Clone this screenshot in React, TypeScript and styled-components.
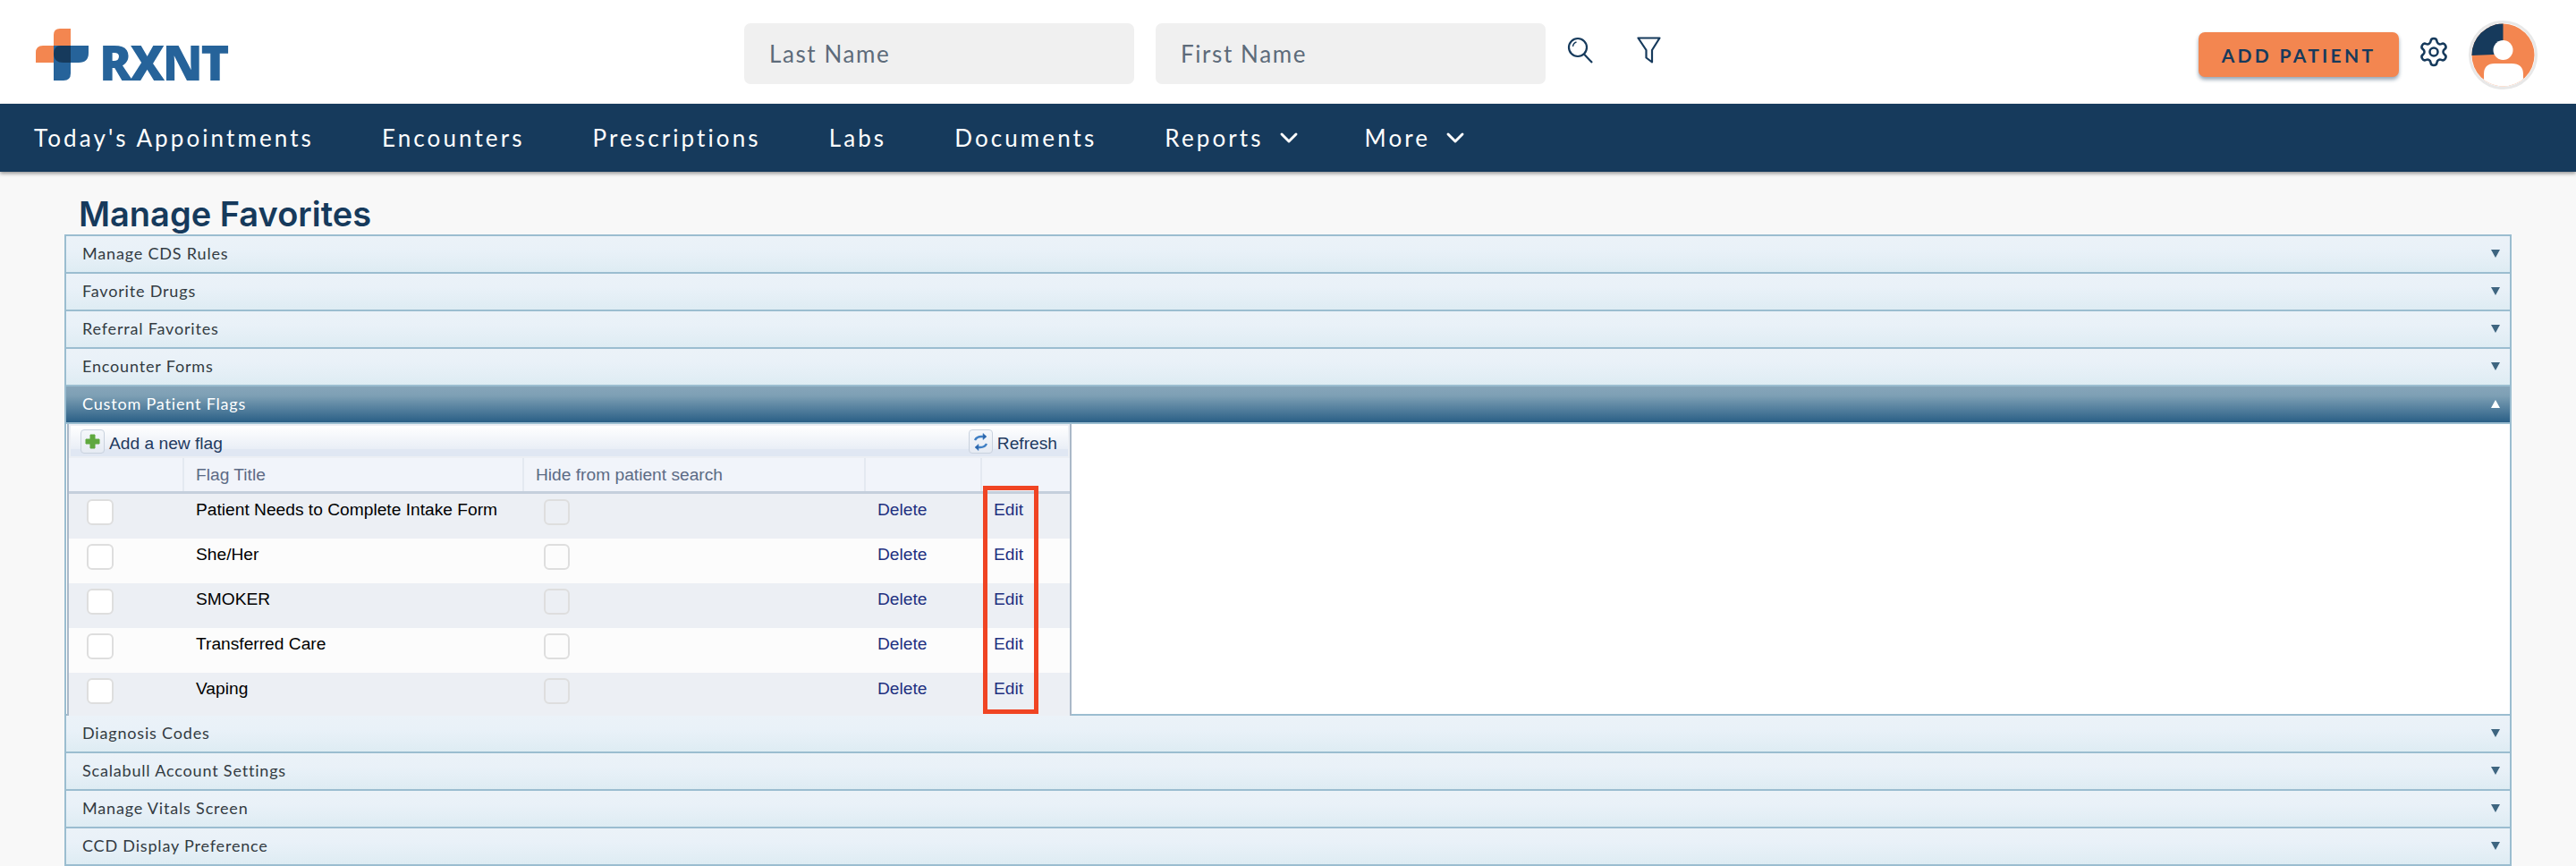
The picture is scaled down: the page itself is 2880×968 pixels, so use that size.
import React from "react";
import styled, { createGlobalStyle } from "styled-components";
import { Settings, ChevronDown } from "lucide-react";

const Global = createGlobalStyle`
  html, body { margin: 0; padding: 0; background: #f8f8f8; }
  body { width: 2880px; height: 968px; overflow: hidden; font-family: "Lato", sans-serif; }
`;

const Page = styled.div`
  width: 2880px;
  height: 968px;
  display: flex;
  flex-direction: column;
  overflow: hidden;
`;

const TopBar = styled.header`
  height: 116px;
  background: #fff;
  display: flex;
  align-items: center;
  padding: 0 43px 0 40px;
  box-sizing: border-box;
`;

const Logo = styled.div`
  display: flex;
  align-items: flex-end;
  gap: 11px;
  height: 58px;
  width: 792px;
  margin-top: 6px;
`;

const LogoText = styled.span`
  font-family: "Open Sans", sans-serif;
  font-weight: 800;
  font-size: 54px;
  line-height: 39px;
  height: 39px;
  margin-bottom: 1px;
  color: #26639a;
  letter-spacing: -2.4px;
`;

const SearchField = styled.div`
  width: 436px;
  height: 68px;
  background: #f0f0f0;
  border-radius: 7px;
  display: flex;
  align-items: center;
  padding-left: 28px;
  box-sizing: border-box;
  margin-right: 24px;
  margin-top: 4px;
  font-size: 26px;
  letter-spacing: 1.6px;
  color: #5d6b7a;
`;

const IconButton = styled.div<{ $w: number; $ml: number }>`
  width: ${(p) => p.$w}px;
  margin-left: ${(p) => p.$ml}px;
  margin-top: -5px;
  display: flex;
  color: #163a5c;
`;

const RightGroup = styled.div`
  margin-left: auto;
  margin-top: 6px;
  display: flex;
  align-items: center;
`;

const AddButton = styled.button`
  width: 224px;
  height: 50px;
  background: #f38650;
  border: 0;
  border-radius: 7px;
  box-shadow: 0 3px 4px rgba(22, 58, 92, 0.45);
  color: #163a5c;
  font-family: "Lato", sans-serif;
  font-weight: 700;
  font-size: 21px;
  letter-spacing: 3.3px;
  padding: 0;
  margin-right: 21px;
`;

const GearWrap = styled.div`
  display: flex;
  color: #163a5c;
  margin-right: 21px;
  margin-top: -7px;
`;

const NavBar = styled.nav`
  height: 76px;
  background: #163a5c;
  box-shadow: 0 2px 4px rgba(0, 0, 0, 0.4);
  display: flex;
  align-items: center;
  padding-left: 38px;
  gap: 76px;
  color: #fff;
  font-size: 26px;
  letter-spacing: 3.1px;
  position: relative;
`;

const NavItem = styled.span`
  display: flex;
  align-items: center;
  gap: 12px;
`;

const NavChevron = styled(ChevronDown)`
  margin-right: -7px;
`;

const Main = styled.main`
  flex: 1;
  padding: 0 72px;
  display: flex;
  flex-direction: column;
`;

const Title = styled.h1`
  margin: 0;
  height: 70px;
  padding: 24px 0 0 16px;
  box-sizing: border-box;
  font-family: "Inter", sans-serif;
  font-weight: 600;
  font-size: 38px;
  line-height: 46px;
  color: #163a5c;
`;

const Accordion = styled.section`
  border: solid #9bbdd0;
  border-width: 2px 2px 0 2px;
  display: flex;
  flex-direction: column;
  width: 2736px;
  box-sizing: border-box;
`;

const Head = styled.div<{ $active?: boolean }>`
  height: 42px;
  flex: none;
  box-sizing: border-box;
  border-bottom: 2px solid #9bbdd0;
  background: ${(p) =>
    p.$active
      ? "linear-gradient(#86a5b9 0%, #7ea0b5 25%, #2a5f86 100%)"
      : "linear-gradient(#ebf2f8 0%, #e9f1f8 40%, #deecf3 100%)"};
  color: ${(p) => (p.$active ? "#fff" : "#333b42")};
  display: flex;
  align-items: center;
  justify-content: space-between;
  padding: 0 11px 2px 18px;
  font-size: 18px;
  letter-spacing: 0.82px;
`;

const Arrow = styled.svg`
  width: 10px;
  height: 9px;
  display: block;
`;

const Pane = styled.div`
  height: 326px;
  flex: none;
  background: #fff;
  border-bottom: 2px solid #9bbdd0;
  box-sizing: border-box;
  display: flex;
`;

const Grid = styled.div`
  position: relative;
  width: 1123px;
  margin-left: 1px;
  height: 326px;
  flex: none;
  box-sizing: border-box;
  border: solid #aab8c8;
  border-width: 0 2px 0 2px;
  padding-top: 2px;
  font-family: "Liberation Sans", Arial, sans-serif;
  font-size: 19.2px;
  background: #eceff4;
`;

const Toolbar = styled.div`
  height: 34px;
  margin-left: 2px;
  margin-right: 2px;
  padding: 6px 12px 1px 11px;
  box-sizing: border-box;
  display: flex;
  align-items: center;
  justify-content: space-between;
  background: linear-gradient(#ffffff 0%, #e9eef6 76%, #e0e7f3 77%, #e0e7f3 100%);
  color: #1f3a5f;
`;

const ToolGroup = styled.div`
  display: flex;
  align-items: center;
  gap: 5px;
`;

const ToolIcon = styled.div`
  width: 27px;
  height: 27px;
  margin-top: -4px;
  box-sizing: border-box;
  border: 1px solid #c9d2de;
  border-radius: 4px;
  background: linear-gradient(#f5f7fb, #e6ebf3);
  display: flex;
  align-items: center;
  justify-content: center;
`;

const ColumnHead = styled.div`
  height: 40px;
  margin-top: 2px;
  box-sizing: border-box;
  background: #f1f4fa;
  border-bottom: 3px solid #c5cfdc;
  display: grid;
  grid-template-columns: 129px 380px 382px 130px 98px;
  color: #5c6b85;
`;

const HeadCell = styled.div`
  border-right: 2px solid #e4e9f1;
  padding: 6px 0 0 13px;
  line-height: 26px;
  box-sizing: border-box;
  &:last-child { border-right: 0; }
`;

const Row = styled.div<{ $odd: boolean; $h: number }>`
  height: ${(p) => p.$h}px;
  background: ${(p) => (p.$odd ? "#eceff4" : "#fcfcfc")};
  display: grid;
  grid-template-columns: 129px 380px 382px 130px 98px;
  color: #000;
`;

const Cell = styled.div<{ $pad?: number }>`
  padding: 5px 0 0 ${(p) => p.$pad ?? 13}px;
  line-height: 26px;
  box-sizing: border-box;
`;

const LinkText = styled.span`
  color: #1f2f80;
`;

const Check = styled.div<{ $white?: boolean }>`
  width: ${(p) => (p.$white ? 30 : 29)}px;
  height: 29px;
  box-sizing: border-box;
  border: 2px solid #dedede;
  border-radius: 6px;
  background: ${(p) => (p.$white ? "#fff" : "transparent")};
  margin-top: 1px;
`;

const RedBox = styled.div`
  position: absolute;
  left: 1022px;
  top: 69px;
  width: 62px;
  height: 255px;
  box-sizing: border-box;
  border: 5px solid #f04423;
  pointer-events: none;
`;

const heads1 = ["Manage CDS Rules", "Favorite Drugs", "Referral Favorites", "Encounter Forms"];
const heads2 = ["Diagnosis Codes", "Scalabull Account Settings", "Manage Vitals Screen", "CCD Display Preference"];
const flags = ["Patient Needs to Complete Intake Form", "She/Her", "SMOKER", "Transferred Care", "Vaping"];

const Tri = ({ up }: { up?: boolean }) => (
  <Arrow viewBox="0 0 10 9">
    <path d={up ? "M5 0 L10 9 L0 9 Z" : "M0 0 L10 0 L5 9 Z"} fill={up ? "#fff" : "#3e6580"} />
  </Arrow>
);

export default function App() {
  return (
    <Page>
      <Global />
      <TopBar>
        <Logo>
          <svg width="60" height="58" viewBox="0 0 60 58">
            <path d="M27 0 H39 V38 H0 V27 Q0 19 8 19 H20 V7 Q20 0 27 0 Z" fill="#f38650" />
            <path d="M20 19 H59 V27 Q59 38 48 38 H39 V50 Q39 58 31 58 H20 Z" fill="#26639a" />
            <path d="M28 19 H39 V38 H31 Q20 38 20 28 Q20 19 28 19 Z" fill="#163a5c" />
          </svg>
          <LogoText>RXNT</LogoText>
        </Logo>
        <SearchField>Last Name</SearchField>
        <SearchField>First Name</SearchField>
        <IconButton $w={30} $ml={0}>
          <svg width="30" height="30" viewBox="0 0 30 30" fill="none" stroke="currentColor" strokeWidth="2.2">
            <circle cx="12" cy="12" r="10" />
            <path d="M19 19.5 L28 29" />
            <path d="M6.5 11 Q7 7 10.5 6" strokeWidth="1.4" />
          </svg>
        </IconButton>
        <IconButton $w={27} $ml={48}>
          <svg width="27" height="30" viewBox="0 0 27 30" fill="none" stroke="currentColor" strokeWidth="2.2">
            <path d="M1.5 1.5 H25.5 L17 15 V28.5 L10.5 23.5 V15 Z" strokeLinejoin="round" />
          </svg>
        </IconButton>
        <RightGroup>
          <AddButton>ADD PATIENT</AddButton>
          <GearWrap>
            <Settings size={36} strokeWidth={1.7} />
          </GearWrap>
          <svg width="77" height="77" viewBox="0 0 77 77">
            <defs>
              <clipPath id="disc"><circle cx="38.5" cy="38.5" r="35" /></clipPath>
            </defs>
            <circle cx="38.5" cy="38.5" r="37" fill="#fff" stroke="#e8e8e8" strokeWidth="3" />
            <g clipPath="url(#disc)">
              <rect x="0" y="0" width="77" height="77" fill="#f38650" />
              <path d="M38.5 0 V33 L28 38 L0 39 V0 Z" fill="#163a5c" />
              <circle cx="38.5" cy="33" r="11" fill="#fff" />
              <path d="M17 77 V60 Q17 48 29 48 H48 Q61 48 61 60 V77 Z" fill="#fff" />
            </g>
          </svg>
        </RightGroup>
      </TopBar>
      <NavBar>
        <NavItem>Today's Appointments</NavItem>
        <NavItem>Encounters</NavItem>
        <NavItem>Prescriptions</NavItem>
        <NavItem>Labs</NavItem>
        <NavItem>Documents</NavItem>
        <NavItem>Reports <NavChevron size={32} strokeWidth={2.2} /></NavItem>
        <NavItem>More <NavChevron size={32} strokeWidth={2.2} /></NavItem>
      </NavBar>
      <Main>
        <Title>Manage Favorites</Title>
        <Accordion>
          {heads1.map((h) => (
            <Head key={h}>{h}<Tri /></Head>
          ))}
          <Head $active>Custom Patient Flags<Tri up /></Head>
          <Pane>
            <Grid>
              <Toolbar>
                <ToolGroup>
                  <ToolIcon>
                    <svg width="17" height="17" viewBox="0 0 17 17">
                      <path d="M6 1 H11 V6 H16 V11 H11 V16 H6 V11 H1 V6 H6 Z" fill="#5fa83f" stroke="#5fa83f" strokeWidth="1" strokeLinejoin="round" />
                    </svg>
                  </ToolIcon>
                  Add a new flag
                </ToolGroup>
                <ToolGroup>
                  <ToolIcon>
                    <svg width="17" height="20" viewBox="0 0 17 20" fill="none" stroke="#3f7fc4" strokeWidth="2.4">
                      <path d="M2 8 Q4 4 9 4 H13" />
                      <path d="M15 12 Q13 16 8 16 H4" />
                      <path d="M11 0.5 L15 4 L11 7.5 Z" fill="#2a62a8" strokeWidth="0.6" />
                      <path d="M6 12.5 L2 16 L6 19.5 Z" fill="#2a62a8" strokeWidth="0.6" />
                    </svg>
                  </ToolIcon>
                  <span>Refresh</span>
                </ToolGroup>
              </Toolbar>
              <ColumnHead>
                <HeadCell />
                <HeadCell>Flag Title</HeadCell>
                <HeadCell>Hide from patient search</HeadCell>
                <HeadCell />
                <HeadCell />
              </ColumnHead>
              {flags.map((f, i) => (
                <Row key={f} $odd={i % 2 === 0} $h={i === 4 ? 48 : 50}>
                  <Cell $pad={20}><Check $white /></Cell>
                  <Cell>{f}</Cell>
                  <Cell $pad={22}><Check /></Cell>
                  <Cell><LinkText>Delete</LinkText></Cell>
                  <Cell><LinkText>Edit</LinkText></Cell>
                </Row>
              ))}
              <RedBox />
            </Grid>
          </Pane>
          {heads2.map((h) => (
            <Head key={h}>{h}<Tri /></Head>
          ))}
        </Accordion>
      </Main>
    </Page>
  );
}
